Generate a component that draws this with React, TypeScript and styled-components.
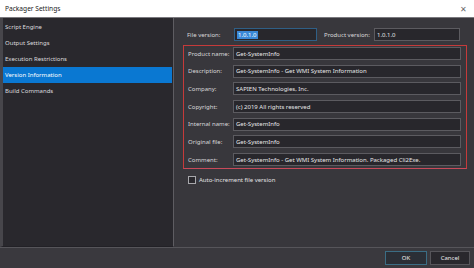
import React from "react";
import styled, { createGlobalStyle } from "styled-components";

const GlobalStyle = createGlobalStyle`
    html, body {
        margin: 0;
        padding: 0;
        width: 474px;
        height: 268px;
        overflow: hidden;
        background: #38373c;
    }
    * {
        box-sizing: border-box;
    }
`;

const SWindow = styled.div`
    display: flex;
    flex-direction: column;
    width: 474px;
    height: 268px;
    font-family: "Noto Sans", "Liberation Sans", sans-serif;
    font-size: 6px;
    color: #e2e2e4;
`;

const STitleBar = styled.div`
    display: flex;
    align-items: center;
    justify-content: space-between;
    height: 18px;
    padding: 0 7px 0 5px;
    background: #ffffff;
    border-bottom: 1px solid #7a797e;
    color: #222;
    font-size: 6.6px;
`;

const SClose = styled.span`
    color: #6a6a6a;
    font-size: 8px;
    line-height: 1;
`;

const SBody = styled.div`
    display: flex;
    flex: 1;
    border-bottom: 1px solid #56555a;
`;

const SSidebar = styled.div`
    width: 174px;
    padding: 1px 1px 0 0;
    background: #29282d;
    border-left: 3px solid #47464b;
    border-right: 1px solid #5e5d62;
    border-bottom: 1px solid #222126;
`;

const SNavItem = styled.div<{ active?: boolean }>`
    display: flex;
    align-items: center;
    height: 16px;
    padding-left: 2px;
    background: ${({ active }) => (active ? "#0a78d2" : "transparent")};
    color: ${({ active }) => (active ? "#ffffff" : "#dcdcde")};
`;

const SContent = styled.div`
    flex: 1;
    display: flex;
    flex-direction: column;
    padding: 10px 7px 0 9px;
    background: #38373c;
`;

const STopRow = styled.div`
    display: flex;
    align-items: center;
    height: 13px;
    padding-left: 4px;
`;

const SLabel = styled.span<{ width?: number; indent?: number }>`
    width: ${({ width }) => width ?? 46}px;
    padding-left: ${({ indent }) => indent ?? 0}px;
    flex-shrink: 0;
    white-space: nowrap;
    color: #d8d8da;
`;

const SInput = styled.div<{ width?: number; selected?: boolean }>`
    display: flex;
    align-items: center;
    height: 13px;
    width: ${({ width }) => (width ? `${width}px` : "auto")};
    flex: ${({ width }) => (width ? "none" : "1")};
    padding-left: 2px;
    background: #28272c;
    border: 1px solid ${({ selected }) => (selected ? "#2f5f86" : "#5c5b60")};
    color: #e6e6e8;
    white-space: nowrap;
    overflow: hidden;
`;

const SSelection = styled.span`
    background: #3a88d8;
    color: #ffffff;
    padding: 0 1px;
`;

const SRedBox = styled.div`
    display: flex;
    flex-direction: column;
    gap: 4.7px;
    margin-top: 4px;
    padding: 1px 5px 2px 4px;
    border: 1px solid #c53a3a;
    border-bottom-color: #c84a5a;
`;

const SRow = styled.div`
    display: flex;
    align-items: center;
`;

const SCheckRow = styled.div`
    display: flex;
    align-items: center;
    gap: 3px;
    margin: 7px 0 0 5px;
`;

const SCheckBox = styled.span`
    width: 8px;
    height: 8px;
    border: 1px solid #a8a8ac;
    background: #2a292e;
`;

const SFooter = styled.div`
    display: flex;
    justify-content: flex-end;
    align-items: center;
    gap: 3px;
    height: 20px;
    padding-right: 4px;
    background: #3a393e;
`;

const SButton = styled.div<{ primary?: boolean }>`
    display: flex;
    align-items: center;
    justify-content: center;
    width: ${({ primary }) => (primary ? 42 : 40)}px;
    height: 14px;
    background: ${({ primary }) => (primary ? "#2b2f36" : "#29282d")};
    border: 1px solid ${({ primary }) => (primary ? "#3b6d84" : "#56555a")};
    color: #ececee;
`;

const navItems = [
    "Script Engine",
    "Output Settings",
    "Execution Restrictions",
    "Version Information",
    "Build Commands",
];

const fields = [
    ["Product name:", "Get-SystemInfo"],
    ["Description:", "Get-SystemInfo - Get WMI System Information"],
    ["Company:", "SAPIEN Technologies, Inc."],
    ["Copyright:", "(c) 2019 All rights reserved"],
    ["Internal name:", "Get-SystemInfo"],
    ["Original file:", "Get-SystemInfo"],
    ["Comment:", "Get-SystemInfo - Get WMI System Information. Packaged Cli2Exe."],
];

export default function App() {
    return (
        <SWindow>
            <GlobalStyle />
            <STitleBar>
                <span>Packager Settings</span>
                <SClose>✕</SClose>
            </STitleBar>
            <SBody>
                <SSidebar>
                    {navItems.map((item) => (
                        <SNavItem key={item} active={item === "Version Information"}>
                            {item}
                        </SNavItem>
                    ))}
                </SSidebar>
                <SContent>
                    <STopRow>
                        <SLabel width={47}>File version:</SLabel>
                        <SInput width={83} selected>
                            <SSelection>1.0.1.0</SSelection>
                        </SInput>
                        <SLabel width={57} indent={7}>Product version:</SLabel>
                        <SInput width={86}>1.0.1.0</SInput>
                    </STopRow>
                    <SRedBox>
                        {fields.map(([label, value]) => (
                            <SRow key={label}>
                                <SLabel width={45}>{label}</SLabel>
                                <SInput>{value}</SInput>
                            </SRow>
                        ))}
                    </SRedBox>
                    <SCheckRow>
                        <SCheckBox />
                        <span>Auto-increment file version</span>
                    </SCheckRow>
                </SContent>
            </SBody>
            <SFooter>
                <SButton primary>OK</SButton>
                <SButton>Cancel</SButton>
            </SFooter>
        </SWindow>
    );
}
